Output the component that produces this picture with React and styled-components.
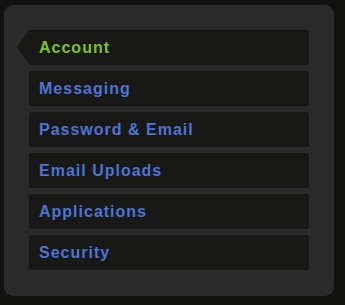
import React from "react";
import styled, { createGlobalStyle } from "styled-components";

const Global = createGlobalStyle`
  html, body { margin: 0; padding: 0; background: #121211; }
  body { width: 345px; height: 305px; overflow: hidden; }
`;

const Page = styled.div`
  padding: 5px 11px 9px 4px;
  width: 345px;
  height: 305px;
  box-sizing: border-box;
`;

const Panel = styled.nav`
  background: #2a2a2a;
  border-radius: 9px;
  padding: 25px 25px 25px 25px;
  display: flex;
  flex-direction: column;
  gap: 6px;
  height: 100%;
  box-sizing: border-box;
`;

const Item = styled.a`
  position: relative;
  display: flex;
  align-items: center;
  height: 35px;
  padding-left: 10px;
  background: #181817;
  border-radius: ${(p) => (p.$active ? "0 3px 3px 0" : "3px")};
  font-family: "Liberation Sans", Arial, sans-serif;
  font-weight: bold;
  font-size: 16px;
  letter-spacing: 1px;
  color: ${(p) => (p.$active ? "#82c11c" : "#4b74d4")};
  text-decoration: none;
  cursor: pointer;

  ${(p) =>
    p.$active &&
    `
    &::before {
      content: "";
      position: absolute;
      left: -12px;
      top: 0;
      border-style: solid;
      border-width: 17.5px 12px 17.5px 0;
      border-color: transparent #181817 transparent transparent;
    }
  `}
`;

const items = ["Account", "Messaging", "Password & Email", "Email Uploads", "Applications", "Security"];

export default function App() {
  return (
    <>
      <Global />
      <Page>
        <Panel>
          {items.map((t, i) => (
            <Item key={t} $active={i === 0}>
              {t}
            </Item>
          ))}
        </Panel>
      </Page>
    </>
  );
}
